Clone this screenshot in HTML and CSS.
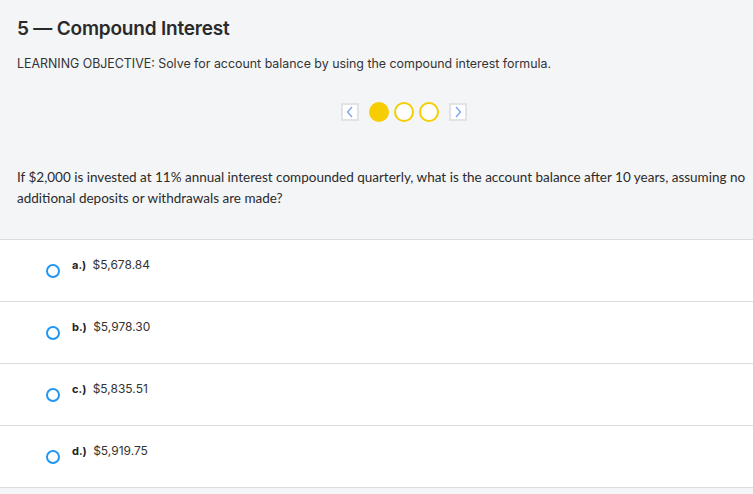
FILE: index.html
```html
<!DOCTYPE html>
<html>
<head>
<meta charset="utf-8">
<link rel="stylesheet" href="styles.css">
</head>
<body>
<div class="page">
  <header class="intro">
    <h1 class="title">5 — Compound Interest</h1>
    <p class="objective">LEARNING OBJECTIVE: Solve for account balance by using the compound interest formula.</p>
    <nav class="pager">
      <span class="arrow"><svg width="10" height="12" viewBox="0 0 10 12"><path d="M7 1 L2.5 6 L7 11" fill="none" stroke="#7b9ef0" stroke-width="1.3"/></svg></span>
      <span class="dot filled"></span>
      <span class="dot"></span>
      <span class="dot"></span>
      <span class="arrow"><svg width="10" height="12" viewBox="0 0 10 12"><path d="M3 1 L7.5 6 L3 11" fill="none" stroke="#7b9ef0" stroke-width="1.3"/></svg></span>
    </nav>
    <p class="question">If $2,000 is invested at 11% annual interest compounded quarterly, what is the account balance after 10 years, assuming no additional deposits or withdrawals are made?</p>
  </header>
  <ul class="options">
    <li class="option"><span class="radio"></span><span class="label"><b>a.)</b> $5,678.84</span></li>
    <li class="option"><span class="radio"></span><span class="label"><b>b.)</b> $5,978.30</span></li>
    <li class="option"><span class="radio"></span><span class="label"><b>c.)</b> $5,835.51</span></li>
    <li class="option"><span class="radio"></span><span class="label"><b>d.)</b> $5,919.75</span></li>
  </ul>
</div>
</body>
</html>
```
FILE: styles.css
```css
html, body {
  margin: 0;
  padding: 0;
  background: #f4f5f7;
}
body {
  font-family: "Inter", "Liberation Sans", sans-serif;
  color: #2b2b2b;
  width: 753px;
  height: 494px;
  overflow: hidden;
}
.intro {
  padding: 17px 4px 0 17px;
  height: 222px;
  border-bottom: 1px solid #dcdcdc;
}
.title {
  margin: 0;
  font-size: 19px;
  font-weight: 600;
  letter-spacing: -0.2px;
  line-height: 24px;
  color: #2a2a2a;
}
.objective {
  margin: 15px 0 0 0;
  font-size: 12.4px;
  line-height: 16px;
  color: #333;
}
.pager {
  display: flex;
  justify-content: center;
  align-items: center;
  gap: 5px;
  margin-top: 28px;
  padding-left: 41px;
  height: 24px;
}
.arrow {
  width: 18px;
  height: 18px;
  box-sizing: border-box;
  border: 2px solid #e2e3e6;
  background: #fff;
  display: flex;
  align-items: center;
  justify-content: center;
  margin: 0 5px;
}
.dot {
  width: 20px;
  height: 20px;
  box-sizing: border-box;
  border-radius: 50%;
  border: 2px solid #f6cd00;
  background: #fff;
}
.dot.filled {
  background: #f6cd00;
}
.question {
  margin: 43px 0 0 0;
  font-family: "Lato", "Liberation Sans", sans-serif;
  font-size: 13.5px;
  line-height: 21px;
  color: #2b2b2b;
}
.options {
  list-style: none;
  margin: 0;
  padding: 0;
  background: #fff;
}
.option {
  height: 61px;
  border-bottom: 1px solid #dcdcdc;
  display: flex;
  align-items: flex-start;
  padding-left: 46px;
}
.radio {
  width: 14px;
  height: 14px;
  box-sizing: border-box;
  border: 2px solid #2196f3;
  border-radius: 50%;
  margin-top: 24px;
}
.label {
  margin-left: 12px;
  margin-top: 17px;
  font-size: 12px;
  line-height: 16px;
  color: #333;
}
.label b {
  font-size: 11px;
  font-weight: 700;
  color: #222;
  margin-right: 3px;
}
```
